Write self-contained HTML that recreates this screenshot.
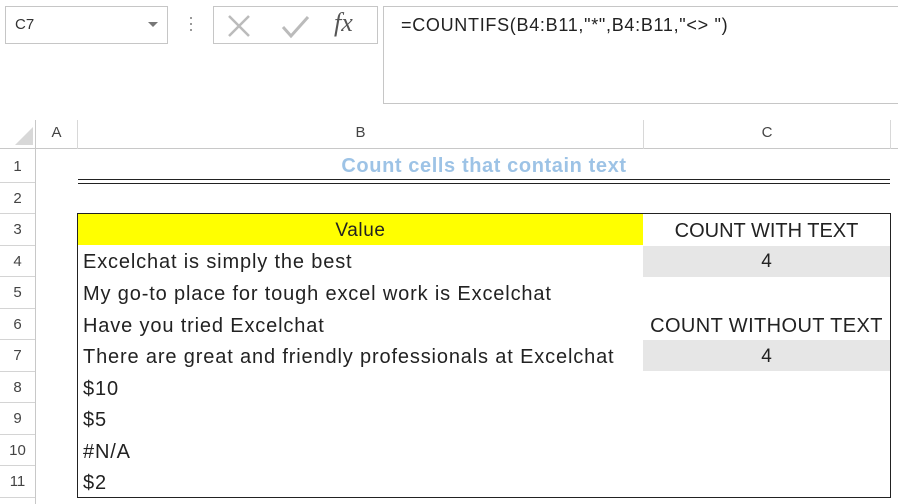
<!DOCTYPE html>
<html><head><style>
*{margin:0;padding:0;box-sizing:border-box}
body{width:898px;height:504px;background:#fff;position:relative;overflow:hidden;font-family:"Liberation Sans",sans-serif;color:#222}
.a{position:absolute}
.t{position:absolute;font-size:20px;letter-spacing:0.85px;white-space:nowrap;line-height:22px}
.c{position:absolute;font-size:19px;white-space:nowrap;text-align:center;line-height:22px}
.rh{position:absolute;left:0;width:35px;text-align:center;font-size:15px;color:#444;border-bottom:1px solid #d4d4d4}
</style></head><body>
<div class="a" style="left:5px;top:6px;width:163px;height:38px;border:1px solid #c6c6c6"></div>
<div class="a" style="left:15px;top:16px;font-size:15px;color:#333">C7</div>
<div class="a" style="left:148px;top:22px;width:0;height:0;border-left:5px solid transparent;border-right:5px solid transparent;border-top:5px solid #777"></div>
<div class="a" style="left:190px;top:17px;width:2px;height:2px;background:#999;box-shadow:0 6px #999,0 12px #999"></div>
<div class="a" style="left:213px;top:6px;width:165px;height:38px;border:1px solid #c6c6c6"></div>
<svg class="a" style="left:225px;top:12px" width="30" height="28"><path d="M4 4L24 24M24 4L4 24" stroke="#bbb" stroke-width="2.5" fill="none"/></svg>
<svg class="a" style="left:280px;top:12px" width="32" height="28"><path d="M3 15L11 24L28 5" stroke="#bbb" stroke-width="3" fill="none"/></svg>
<div class="a" style="left:334px;top:8px;font-family:'Liberation Serif',serif;font-style:italic;font-size:26px;color:#555">fx</div>
<div class="a" style="left:383px;top:6px;width:520px;height:98px;border:1px solid #c6c6c6"></div>
<div class="a" style="left:401px;top:15px;font-size:18px;letter-spacing:0.7px;color:#222">=COUNTIFS(B4:B11,"*",B4:B11,"&lt;&gt; ")</div>
<div class="a" style="left:0;top:120px;width:898px;height:29px;background:#fff;border-bottom:1px solid #c8c8c8"></div>
<svg class="a" style="left:14px;top:124px" width="20" height="22"><path d="M19 3L19 21L1 21Z" fill="#d8d8d8"/></svg>
<div class="a" style="left:35px;top:120px;width:1px;height:384px;background:#c8c8c8"></div>
<div class="a" style="left:77px;top:120px;width:1px;height:29px;background:#d8d8d8"></div>
<div class="a" style="left:643px;top:120px;width:1px;height:29px;background:#d8d8d8"></div>
<div class="a" style="left:890px;top:120px;width:1px;height:29px;background:#d8d8d8"></div>
<div class="a" style="left:36px;top:124px;width:41px;text-align:center;font-size:15px;color:#444">A</div>
<div class="a" style="left:78px;top:124px;width:565px;text-align:center;font-size:15px;color:#444">B</div>
<div class="a" style="left:644px;top:124px;width:246px;text-align:center;font-size:15px;color:#444">C</div>
<div class="rh" style="top:150px;height:33px;line-height:33px">1</div>
<div class="rh" style="top:183px;height:31px;line-height:31px">2</div>
<div class="rh" style="top:214px;height:31.5px;line-height:31px">3</div>
<div class="rh" style="top:245.5px;height:31.5px;line-height:31px">4</div>
<div class="rh" style="top:277px;height:31.5px;line-height:31px">5</div>
<div class="rh" style="top:308.5px;height:31.5px;line-height:31px">6</div>
<div class="rh" style="top:340px;height:31.5px;line-height:31px">7</div>
<div class="rh" style="top:371.5px;height:31.5px;line-height:31px">8</div>
<div class="rh" style="top:403px;height:31.5px;line-height:31px">9</div>
<div class="rh" style="top:434.5px;height:31.5px;line-height:31px">10</div>
<div class="rh" style="top:466px;height:31.5px;line-height:31px">11</div>
<div class="a" style="left:78px;top:155px;width:812px;text-align:center;font-size:20px;letter-spacing:0.6px;font-weight:bold;color:#9dc3e6;line-height:22px">Count cells that contain text</div>
<div class="a" style="left:78px;top:179px;width:812px;height:5px;border-top:1.5px solid #222;border-bottom:1.5px solid #222"></div>
<div class="a" style="left:78px;top:214px;width:565px;height:31px;background:#ffff00"></div>
<div class="a" style="left:643px;top:245.5px;width:247px;height:31px;background:#e6e6e6"></div>
<div class="a" style="left:643px;top:340px;width:247px;height:31px;background:#e6e6e6"></div>
<div class="a" style="left:77px;top:213px;width:814px;height:285px;border:1.5px solid #222"></div>
<div class="c" style="left:78px;top:220px;width:565px;letter-spacing:0.6px">Value</div>
<div class="c" style="left:643px;top:220px;width:247px;font-size:20px">COUNT WITH TEXT</div>
<div class="c" style="left:643px;top:251px;width:247px">4</div>
<div class="c" style="left:643px;top:315px;width:247px;font-size:20px;letter-spacing:0.4px">COUNT WITHOUT TEXT</div>
<div class="c" style="left:643px;top:346px;width:247px">4</div>
<div class="t" style="left:83px;top:251px">Excelchat is simply the best</div>
<div class="t" style="left:83px;top:283px">My go-to place for tough excel work is Excelchat</div>
<div class="t" style="left:83px;top:315px">Have you tried Excelchat</div>
<div class="t" style="left:83px;top:346px">There are great and friendly professionals at Excelchat</div>
<div class="t" style="left:83px;top:378px">$10</div>
<div class="t" style="left:83px;top:409px">$5</div>
<div class="t" style="left:83px;top:441px">#N/A</div>
<div class="t" style="left:83px;top:472px">$2</div>
</body></html>
